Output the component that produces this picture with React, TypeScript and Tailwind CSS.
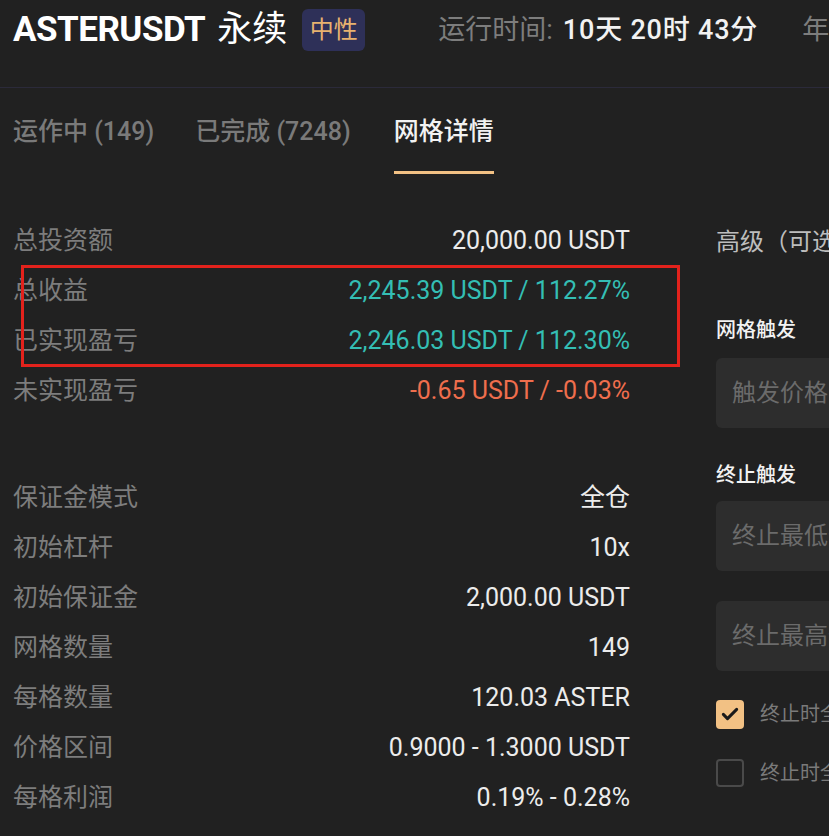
import React from "react";

const font = { fontFamily: 'Roboto, "Noto Sans CJK SC", sans-serif' };

function Row({ label, value, color = "text-[#ececec]" }: { label: string; value: string; color?: string }) {
  return (
    <div className="flex h-[50px] items-center justify-between">
      <span className="text-[25px] text-[#7d7d7d]">{label}</span>
      <span className={`text-[25px] ${color}`}>{value}</span>
    </div>
  );
}

function InputBox({ placeholder }: { placeholder: string }) {
  return (
    <div className="flex h-[70px] w-[200px] items-center rounded-[6px] bg-[#2d2d2d] px-4">
      <span className="whitespace-nowrap text-[24px] text-[#6b6b6b]">{placeholder}</span>
    </div>
  );
}

export default function App() {
  return (
    <div className="relative h-[836px] w-[829px] overflow-hidden bg-[#212121] text-white" style={font}>
      {/* header */}
      <div className="flex h-[88px] items-start border-b border-[#2b2a3a] pl-[13px] pt-[8px]">
        <div className="flex items-center whitespace-nowrap">
          <span className="text-[35px] font-bold leading-[44px] tracking-[-0.5px]">ASTERUSDT</span>
          <span className="ml-[12px] text-[35px] leading-[44px]">永续</span>
          <span className="ml-[15px] flex h-[42px] w-[63px] items-center justify-center rounded-[6px] bg-[#2e3058] text-[24px] text-[#e7b26f]">
            中性
          </span>
          <span className="ml-[73px] text-[27px] text-[#7d7d7d]">运行时间:</span>
          <span className="ml-[10px] text-[27px] font-medium tracking-[0.8px] text-[#f2f2f2]">10天 20时 43分</span>
          <span className="ml-[44px] text-[27px] text-[#7d7d7d]">年化收益</span>
        </div>
      </div>

      {/* tabs */}
      <div className="flex h-[86px] items-start pl-[13px] pt-[25px]">
        <div className="flex whitespace-nowrap">
          <span className="text-[25px] font-medium text-[#7a7a7a]">运作中 (149)</span>
          <span className="ml-[41px] text-[25px] font-medium text-[#7a7a7a]">已完成 (7248)</span>
          <div className="ml-[43px] flex flex-col">
            <span className="text-[25px] font-medium text-[#f2f2f2]">网格详情</span>
            <div className="mt-[20px] h-[3px] w-full bg-[#f2c184]" />
          </div>
        </div>
      </div>

      {/* body */}
      <div className="flex pl-[13px]">
        <div className="w-[617px] shrink-0">
          <div className="mt-[42px]">
            <Row label="总投资额" value="20,000.00 USDT" />
            <Row label="总收益" value="2,245.39 USDT / 112.27%" color="text-[#34beb4]" />
            <Row label="已实现盈亏" value="2,246.03 USDT / 112.30%" color="text-[#34beb4]" />
            <Row label="未实现盈亏" value="-0.65 USDT / -0.03%" color="text-[#ef6e4d]" />
          </div>
          <div className="mt-[57px]">
            <Row label="保证金模式" value="全仓" />
            <Row label="初始杠杆" value="10x" />
            <Row label="初始保证金" value="2,000.00 USDT" />
            <Row label="网格数量" value="149" />
            <Row label="每格数量" value="120.03 ASTER" />
            <Row label="价格区间" value="0.9000 - 1.3000 USDT" />
            <Row label="每格利润" value="0.19% - 0.28%" />
          </div>
        </div>

        <div className="ml-[86px] flex shrink-0 flex-col">
          <span className="mt-[50px] whitespace-nowrap text-[24px] text-[#bdbdbd]">高级（可选）</span>
          <span className="mt-[55px] text-[20px] font-medium text-[#f2f2f2]">网格触发</span>
          <div className="mt-[13px]">
            <InputBox placeholder="触发价格" />
          </div>
          <span className="mt-[32px] text-[20px] font-medium text-[#f2f2f2]">终止触发</span>
          <div className="mt-[11px]">
            <InputBox placeholder="终止最低价" />
          </div>
          <div className="mt-[30px]">
            <InputBox placeholder="终止最高价" />
          </div>
          <div className="mt-[28px] flex items-center">
            <div className="flex h-[29px] w-[28px] items-center justify-center rounded-[4px] bg-[#f2c184]">
              <svg width="20" height="20" viewBox="0 0 24 24" fill="none">
                <path d="M4 12.5l5 5L20 6.5" stroke="#1a1a1a" strokeWidth="3.6" strokeLinecap="round" strokeLinejoin="round" />
              </svg>
            </div>
            <span className="ml-[16px] whitespace-nowrap text-[20px] text-[#7a7a7a]">终止时全部平仓</span>
          </div>
          <div className="mt-[29px] flex items-center">
            <div className="h-[28px] w-[28px] rounded-[4px] border-2 border-[#4a4a4a]" />
            <span className="ml-[16px] whitespace-nowrap text-[20px] text-[#7a7a7a]">终止时全部撤单</span>
          </div>
        </div>
      </div>

      {/* annotation box */}
      <div className="pointer-events-none absolute left-[21px] top-[265px] h-[102px] w-[659px] border-[3px] border-[#e3221c]" />
    </div>
  );
}
